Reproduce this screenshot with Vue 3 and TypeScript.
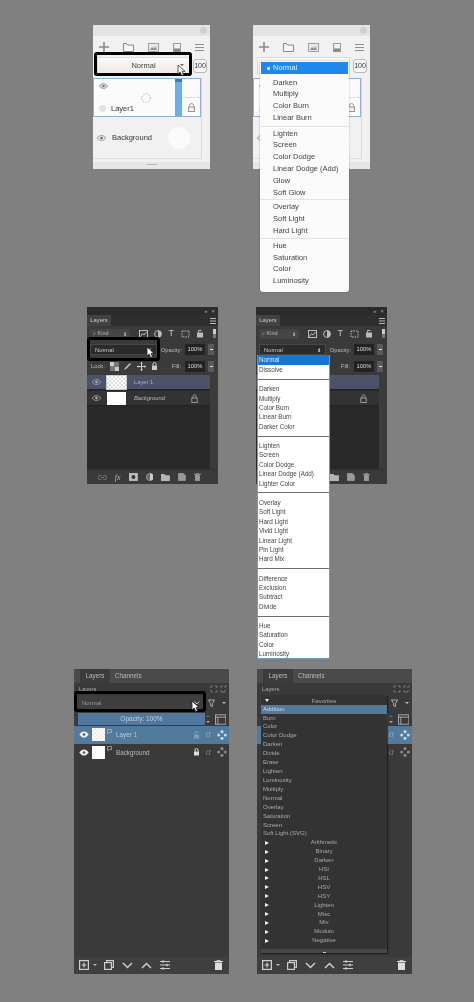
<script setup lang="ts">
const sketchMenu: string[][] = [
  ['Normal'],
  ['Darken', 'Multiply', 'Color Burn', 'Linear Burn'],
  ['Lighten', 'Screen', 'Color Dodge', 'Linear Dodge (Add)', 'Glow', 'Soft Glow'],
  ['Overlay', 'Soft Light', 'Hard Light'],
  ['Hue', 'Saturation', 'Color', 'Luminosity'],
]
const psMenu: string[][] = [
  ['Normal', 'Dissolve'],
  ['Darken', 'Multiply', 'Color Burn', 'Linear Burn', 'Darker Color'],
  ['Lighten', 'Screen', 'Color Dodge', 'Linear Dodge (Add)', 'Lighter Color'],
  ['Overlay', 'Soft Light', 'Hard Light', 'Vivid Light', 'Linear Light', 'Pin Light', 'Hard Mix'],
  ['Difference', 'Exclusion', 'Subtract', 'Divide'],
  ['Hue', 'Saturation', 'Color', 'Luminosity'],
]
const kritaFav: string[] = [
  'Addition', 'Burn', 'Color', 'Color Dodge', 'Darken', 'Divide', 'Erase', 'Lighten',
  'Luminosity', 'Multiply', 'Normal', 'Overlay', 'Saturation', 'Screen', 'Soft Light (SVG)',
]
const kritaGroups: string[] = [
  'Arithmetic', 'Binary', 'Darken', 'HSI', 'HSL', 'HSV', 'HSY', 'Lighten', 'Misc', 'Mix', 'Modulo', 'Negative',
]
const variants: boolean[] = [false, true]
</script>

<template>
  <main class="page">
    <!-- Row 1: sketch-style app -->
    <section class="row row-a">
      <article v-for="open in variants" :key="'a' + open" class="sk">
        <header class="sk-title"><i class="sk-dot"></i></header>
        <nav class="sk-tools">
          <svg width="10" height="10" viewBox="0 0 10 10"><path d="M5 0v10M0 5h10" stroke="#8a8a8a" stroke-width="1.6" /></svg>
          <svg width="11" height="9" viewBox="0 0 11 9"><path d="M.5 8.5v-8h3l1 1.500h6v6.500z" fill="#f6f6f6" stroke="#8a8a8a" /></svg>
          <svg width="11" height="9" viewBox="0 0 11 9"><rect x=".5" y=".5" width="10" height="8" fill="#e8e8e8" stroke="#a0a0a0" /><path d="M2 7l2-3 2 2 1-3 2 4z" fill="#8a8a8a" /></svg>
          <svg width="8" height="9" viewBox="0 0 8 9"><rect x=".5" y=".5" width="7" height="8" fill="#f2f2f2" stroke="#999" /><rect x="1" y="5.500" width="6" height="3" fill="#888" /></svg>
          <svg width="9" height="7" viewBox="0 0 9 7"><path d="M0 .5h9M0 3.500h9M0 6.500h9" stroke="#909090" /></svg>
        </nav>
        <div class="sk-select">
          <div class="sk-field"><span v-if="!open">Normal</span><b class="sk-caret"></b></div>
          <div class="sk-hundred">100</div>
        </div>
        <div class="sk-list">
          <div class="sk-row sk-active">
            <div class="sk-body">
              <svg class="sk-eye" width="9" height="6" viewBox="0 0 9 6"><path d="M.3 3C2.500-.4 6.500-.4 8.700 3 6.500 6.400 2.500 6.400.3 3z" fill="#d8d8d8" stroke="#8a8a8a" stroke-width=".7" /><circle cx="4.500" cy="3" r="1.300" fill="#777" /></svg>
              <svg class="sk-spin" width="10" height="10" viewBox="0 0 10 10"><circle cx="5" cy="5" r="4.300" fill="none" stroke="#999" stroke-width=".8" stroke-dasharray="1.400 1.400" /></svg>
              <div class="sk-name"><i class="sk-ghost"></i><span v-if="!open">Layer1</span></div>
            </div>
            <div class="sk-bar"></div>
            <div class="sk-side">
              <div></div>
              <div><svg width="7" height="9" viewBox="0 0 7 9"><path d="M1.500 4V2.500a2 2 0 0 1 4 0V4" fill="none" stroke="#9a9a9a" /><rect x=".5" y="4" width="6" height="4.500" fill="#eee" stroke="#9a9a9a" /></svg></div>
            </div>
          </div>
          <div class="sk-row sk-plain">
            <svg width="9" height="6" viewBox="0 0 9 6"><path d="M.3 3C2.500-.4 6.500-.4 8.700 3 6.500 6.400 2.500 6.400.3 3z" fill="#eee" stroke="#777" stroke-width=".7" /><circle cx="4.500" cy="3" r="1.300" fill="#666" /></svg>
            <span v-if="!open">Background</span>
            <i class="sk-thumb"></i>
          </div>
        </div>
        <footer class="sk-foot"><i></i></footer>

        <div v-if="!open" class="callout sk-callout"></div>
        <svg v-if="!open" class="cursor sk-cur" width="9" height="13" viewBox="0 0 9 13"><path d="M1 1v9l2.200-2 1.500 3.500 1.800-.8L5 7.400h3z" fill="#fff" stroke="#333" stroke-width=".8" /></svg>

        <div v-if="open" class="sk-menu">
          <div v-for="(group, gi) in sketchMenu" :key="gi" class="sk-group">
            <div v-for="item in group" :key="item" class="sk-item" :class="{ 'sk-on': item === 'Normal' }">
              <i v-if="item === 'Normal'" class="sk-bullet"></i>{{ item }}
            </div>
          </div>
        </div>
        <svg v-if="open" class="cursor sk-cur2" width="9" height="13" viewBox="0 0 9 13"><path d="M1 1v9l2.200-2 1.500 3.500 1.800-.8L5 7.400h3z" fill="#fff" stroke="#333" stroke-width=".8" /></svg>
      </article>
    </section>

    <!-- Row 2: Photoshop-style panel -->
    <section class="row row-b">
      <article v-for="open in variants" :key="'b' + open" class="ps">
        <header class="ps-strip"><span>«</span><span>×</span></header>
        <div class="ps-tabs"><div class="ps-tab">Layers</div><svg width="6" height="6" viewBox="0 0 6 6"><path d="M0 .5h6M0 3h6M0 5.500h6" stroke="#bbb" /></svg></div>
        <div class="ps-kind">
          <div class="ps-kindbox"><span>⌕ Kind</span><b>⬍</b></div>
          <svg width="9" height="8" viewBox="0 0 9 8"><rect x=".5" y=".5" width="8" height="7" fill="none" stroke="#bbb" /><path d="M1.500 6.500l2-3 1.500 1.500 2.500-3" stroke="#bbb" fill="none" /></svg>
          <svg width="8" height="8" viewBox="0 0 8 8"><circle cx="4" cy="4" r="3.400" fill="none" stroke="#bbb" /><path d="M4 .6a3.400 3.400 0 0 1 0 6.800z" fill="#bbb" /></svg>
          <span class="ps-t">T</span>
          <svg width="9" height="8" viewBox="0 0 9 8"><path d="M1 1h7v6H1z" fill="none" stroke="#bbb" stroke-dasharray="1.500 1" /></svg>
          <svg width="8" height="9" viewBox="0 0 8 9"><path d="M1 3.500h6v5H1z" fill="#bbb" /><path d="M2.500 3.500V1.500h3" fill="none" stroke="#bbb" /></svg>
          <i class="ps-toggle"></i>
        </div>
        <div class="ps-blend">
          <div class="ps-select"><span>Normal</span><b>⬍</b></div>
          <span class="ps-label">Opacity:</span>
          <div class="ps-input">100%</div>
          <div class="ps-btn"><i></i></div>
        </div>
        <div class="ps-lock">
          <span class="ps-label ps-locktext" :class="{ 'ps-hid': open }">Lock:</span>
          <svg width="9" height="9" viewBox="0 0 8 8"><path d="M0 0h4v4H0zM4 4h4v4H4z" fill="#ccc" /><path d="M4 0h4v4H4zM0 4h4v4H0z" fill="#777" /></svg>
          <svg width="9" height="9" viewBox="0 0 9 9"><path d="M1 8l1-2L7 1l1 1-5 5z" fill="#ccc" /></svg>
          <svg width="9" height="9" viewBox="0 0 9 9"><path d="M4.500 0v9M0 4.500h9" stroke="#ccc" /><path d="M4.500 0l-1.500 1.500h3zM4.500 9l-1.500-1.500h3zM0 4.500l1.500-1.500v3zM9 4.500l-1.500-1.500v3z" fill="#ccc" /></svg>
          <svg width="7" height="8" viewBox="0 0 7 8"><path d="M2 3.500V2a1.500 1.500 0 0 1 3 0v1.500" fill="none" stroke="#ccc" /><rect x="1" y="3.500" width="5" height="4.500" fill="#ccc" /></svg>
          <span class="ps-label ps-fill">Fill:</span>
          <div class="ps-input">100%</div>
          <div class="ps-btn"><i></i></div>
        </div>
        <div class="ps-list">
          <div class="ps-layers">
            <div class="ps-row ps-sel">
              <svg width="9" height="6" viewBox="0 0 9 6"><path d="M.3 3C2.500-.4 6.500-.4 8.700 3 6.500 6.400 2.500 6.400.3 3z" fill="none" stroke="#aaa" stroke-width=".8" /><circle cx="4.500" cy="3" r="1.400" fill="#aaa" /></svg>
              <i class="ps-thumb ps-check"></i><span v-if="!open">Layer 1</span>
            </div>
            <div class="ps-row">
              <svg width="9" height="6" viewBox="0 0 9 6"><path d="M.3 3C2.500-.4 6.500-.4 8.700 3 6.500 6.400 2.500 6.400.3 3z" fill="none" stroke="#aaa" stroke-width=".8" /><circle cx="4.500" cy="3" r="1.400" fill="#aaa" /></svg>
              <i class="ps-thumb"></i><em v-if="!open">Background</em>
              <svg class="ps-rowlock" width="7" height="9" viewBox="0 0 7 9"><path d="M2 4V2.300a1.500 1.500 0 0 1 3 0V4" fill="none" stroke="#999" /><rect x=".8" y="4" width="5.400" height="4.500" fill="none" stroke="#999" /></svg>
            </div>
          </div>
          <div class="ps-scroll"></div>
        </div>
        <footer class="ps-foot">
          <svg width="9" height="5" viewBox="0 0 9 5"><path d="M3.500.5H2a2 2 0 0 0 0 4h1.500M5.500.5H7a2 2 0 0 1 0 4H5.500M3 2.500h3" fill="none" stroke="#777" /></svg>
          <span class="ps-fx" :class="{ 'ps-hid': open }">fx</span>
          <svg width="9" height="8" viewBox="0 0 9 8"><rect width="9" height="8" fill="#bbb" /><circle cx="4.500" cy="4" r="2" fill="#333" /></svg>
          <svg width="8" height="8" viewBox="0 0 8 8"><circle cx="4" cy="4" r="3.600" fill="#666" stroke="#bbb" stroke-width=".6" /><path d="M4 .4a3.600 3.600 0 0 1 0 7.200z" fill="#ccc" /></svg>
          <svg width="9" height="7" viewBox="0 0 9 7"><path d="M0 7V0h3.500l1 1.300H9V7z" fill="#b5b5b5" /></svg>
          <svg width="8" height="8" viewBox="0 0 8 8"><path d="M.5.500h5l2 2v5h-7z" fill="#999" stroke="#bbb" stroke-width=".5" /></svg>
          <svg width="7" height="8" viewBox="0 0 7 8"><path d="M0 1.300h7M2.500 1V.3h2V1" stroke="#999" fill="none" /><path d="M1 2h5v6H1z" fill="#999" /></svg>
        </footer>

        <div v-if="!open" class="callout ps-callout"></div>
        <svg v-if="!open" class="cursor ps-cur" width="9" height="13" viewBox="0 0 9 13"><path d="M1 1v9l2.200-2 1.500 3.500 1.800-.8L5 7.400h3z" fill="#fff" stroke="#222" stroke-width=".8" /></svg>

        <div v-if="open" class="ps-menu">
          <div v-for="(group, gi) in psMenu" :key="gi" class="ps-group">
            <div v-for="item in group" :key="item" class="ps-item" :class="{ 'ps-on': item === 'Normal' }">{{ item }}</div>
          </div>
        </div>
        <svg v-if="open" class="cursor ps-cur2" width="13" height="15" viewBox="0 0 13 15"><path d="M1 1v9l2.200-2 1.500 3.500 1.800-.8L5 7.400h3z" fill="#fff" stroke="#222" stroke-width=".8" /><path d="M10 11.500v3M8.500 13h3" stroke="#555" stroke-width=".8" /></svg>
      </article>
    </section>

    <!-- Row 3: Krita-style docker -->
    <section class="row row-c">
      <article v-for="open in variants" :key="'c' + open" class="kr">
        <div class="kr-tabs"><div class="kr-tab kr-tabon">Layers</div><div class="kr-tab">Channels</div></div>
        <div class="kr-label">
          <span>Layers</span>
          <svg width="18" height="8" viewBox="0 0 18 8"><path d="M0 2h2V0M6 0v2h2M0 6h2v2M6 8V6h2M14 2h2V0M10 2h2V0M10 6h2v2M14 8V6h2" fill="none" stroke="#777" /></svg>
        </div>
        <div class="kr-blend">
          <div class="kr-select"><span v-if="!open">Normal</span><i v-else></i><svg width="6" height="4" viewBox="0 0 6 4"><path d="M.5.500L3 3 5.500.500" fill="none" stroke="#bbb" /></svg></div>
          <svg width="8" height="9" viewBox="0 0 8 9"><path d="M.5.500h7L5 4.500V8L3 7V4.500z" fill="none" stroke="#bbb" /></svg>
          <b class="kr-tri"></b>
        </div>
        <div class="kr-op">
          <div class="kr-bar"><template v-if="!open">Opacity:  100%</template></div>
          <div class="kr-spin"><b></b><b></b></div>
          <svg width="12" height="11" viewBox="0 0 12 11"><rect x=".5" y=".5" width="11" height="10" fill="none" stroke="#aaa" /><path d="M.5 3h11M3 3v7.500" stroke="#aaa" /></svg>
        </div>
        <div class="kr-row kr-sel">
          <svg width="10" height="7" viewBox="0 0 10 7"><path d="M.3 3.500C3-.6 7-.6 9.700 3.500 7 7.600 3 7.600.3 3.500z" fill="#eee" /><circle cx="5" cy="3.500" r="1.300" fill="#555" /></svg>
          <i class="kr-thumb kr-lay"></i>
          <svg class="kr-mini" width="6" height="6" viewBox="0 0 6 6"><path d="M.5.500h4v3h-2L1 5V3.500H.5z" fill="none" stroke="#bbb" stroke-width=".7" /></svg>
          <span v-if="!open">Layer 1</span>
          <div class="kr-icons">
            <svg width="7" height="8" viewBox="0 0 7 8"><path d="M2 3.500V2a1.500 1.500 0 0 1 3 0" fill="none" stroke="#7b9cbb" /><rect x="1" y="3.500" width="5" height="4" fill="#7b9cbb" /></svg>
            <span class="kr-a">α</span>
            <svg width="10" height="10" viewBox="0 0 9 9"><circle cx="4.500" cy="1.500" r="1.400" fill="#c7d7e5" /><circle cx="1.500" cy="4.500" r="1.400" fill="#c7d7e5" /><circle cx="7.500" cy="4.500" r="1.400" fill="#c7d7e5" /><circle cx="4.500" cy="7.500" r="1.400" fill="#c7d7e5" /></svg>
          </div>
        </div>
        <div class="kr-row">
          <svg width="10" height="7" viewBox="0 0 10 7"><path d="M.3 3.500C3-.6 7-.6 9.700 3.500 7 7.600 3 7.600.3 3.500z" fill="#eee" /><circle cx="5" cy="3.500" r="1.300" fill="#555" /></svg>
          <i class="kr-thumb"></i>
          <svg class="kr-mini" width="6" height="6" viewBox="0 0 6 6"><path d="M.5.500h4v3h-2L1 5V3.500H.5z" fill="none" stroke="#bbb" stroke-width=".7" /></svg>
          <span v-if="!open">Background</span>
          <div class="kr-icons">
            <svg width="7" height="8" viewBox="0 0 7 8"><path d="M2 3.500V2a1.500 1.500 0 0 1 3 0v1.500" fill="none" stroke="#ddd" /><rect x="1" y="3.500" width="5" height="4" fill="#ddd" /></svg>
            <span class="kr-a kr-dim">α</span>
            <svg width="10" height="10" viewBox="0 0 9 9"><circle cx="4.500" cy="1.500" r="1.400" fill="#888" /><circle cx="1.500" cy="4.500" r="1.400" fill="#888" /><circle cx="7.500" cy="4.500" r="1.400" fill="#888" /><circle cx="4.500" cy="7.500" r="1.400" fill="#888" /></svg>
          </div>
        </div>
        <div class="kr-fill"></div>
        <footer class="kr-foot">
          <svg width="10" height="10" viewBox="0 0 10 10"><rect x=".6" y=".6" width="8.800" height="8.800" fill="none" stroke="#d0d0d0" stroke-width="1.200" /><path d="M5 2.500v5M2.500 5h5" stroke="#d0d0d0" stroke-width="1.200" /></svg>
          <b class="kr-tri kr-tri2"></b>
          <svg width="10" height="10" viewBox="0 0 10 10"><rect x=".6" y="2.600" width="6.800" height="6.800" fill="none" stroke="#ccc" stroke-width="1.200" /><path d="M2.600 2.600V.6h6.800v6.800H7.400" fill="none" stroke="#ccc" stroke-width="1.200" /></svg>
          <svg width="11" height="7" viewBox="0 0 11 7"><path d="M1 1l4.500 4.500L10 1" fill="none" stroke="#ccc" stroke-width="1.500" /></svg>
          <svg width="11" height="7" viewBox="0 0 11 7"><path d="M1 6l4.500-4.500L10 6" fill="none" stroke="#ccc" stroke-width="1.500" /></svg>
          <svg width="10" height="10" viewBox="0 0 10 10"><path d="M0 1.500h10M0 5h10M0 8.500h10" stroke="#ccc" stroke-width="1.100" /><path d="M3 .3v2.400M7 3.800v2.400M3 7.300v2.400" stroke="#ccc" stroke-width="1.400" /></svg>
          <svg class="kr-trash" width="9" height="10" viewBox="0 0 9 10"><path d="M0 1.500h9M3 1V.3h3V1" stroke="#ddd" fill="none" /><path d="M1 2.500h7V10H1z" fill="#ddd" /></svg>
        </footer>

        <div v-if="!open" class="callout kr-callout"></div>
        <svg v-if="!open" class="cursor kr-cur" width="9" height="13" viewBox="0 0 9 13"><path d="M1 1v9l2.200-2 1.500 3.500 1.800-.8L5 7.400h3z" fill="#fff" stroke="#222" stroke-width=".8" /></svg>

        <div v-if="open" class="kr-menu">
          <div class="kr-head"><b class="kr-down"></b>Favorites</div>
          <div v-for="(item, i) in kritaFav" :key="item" class="kr-item" :class="{ 'kr-on': i === 0 }">{{ item }}</div>
          <div v-for="g in kritaGroups" :key="g" class="kr-head"><b class="kr-right"></b>{{ g }}</div>
          <div class="kr-more"><b></b></div>
        </div>
        <svg v-if="open" class="cursor kr-cur2" width="9" height="13" viewBox="0 0 9 13"><path d="M1 1v9l2.200-2 1.500 3.500 1.800-.8L5 7.400h3z" fill="#fff" stroke="#222" stroke-width=".8" /></svg>
      </article>
    </section>
  </main>
</template>

<style>
html, body { margin: 0; background: #808080; }
</style>

<style scoped>
.page { width: 474px; height: 1002px; box-sizing: border-box; padding-top: 25px; overflow: hidden; background: #808080; font-family: "Liberation Sans", Arial, sans-serif; filter: blur(0.35px); }
.page i, .page b, .page em { display: block; }
.page em { font-style: italic; }
.row { display: flex; }
.row-a { margin-left: 93px; gap: 43px; }
.row-b { margin-top: 139px; margin-left: 87px; gap: 38px; }
.row-c { margin-top: 185px; margin-left: 74px; gap: 28px; }
.callout { position: absolute; box-sizing: border-box; border: 3px solid #000; border-radius: 3px; }
.cursor { position: absolute; }

/* sketch-style */
.sk { position: relative; width: 117px; height: 143px; background: #f1f1f1; display: flex; flex-direction: column; color: #333; font-size: 7.500px; }
.sk-title { height: 11px; background: #e3e3e3; display: flex; justify-content: flex-end; align-items: center; padding-right: 3px; flex: none; }
.sk-dot { width: 7px; height: 7px; border-radius: 50%; background: #cfcfcf; }
.sk-tools { height: 18px; flex: none; display: flex; align-items: center; justify-content: space-between; padding: 4px 6px 0 6px; box-sizing: border-box; }
.sk-select { height: 21px; flex: none; margin-top: 1px; display: flex; align-items: center; padding: 0 3px 0 4px; gap: 3px; box-sizing: border-box; }
.sk-field { flex: 1; height: 15px; background: linear-gradient(#fafafa, #f1e9e2); border: 1px solid #ddd; display: flex; justify-content: center; align-items: center; position: relative; color: #444; }
.sk-caret { position: absolute; right: 5px; top: 6px; border: 2.500px solid transparent; border-top-color: #666; }
.sk-hundred { width: 12px; height: 12px; border: 1px solid #bbb; border-radius: 3px; font-size: 7px; text-align: center; line-height: 12px; background: #f6f6f6; flex: none; }
.sk-list { margin-top: 2px; width: 108px; flex: 1; display: flex; flex-direction: column; border-right: 1px solid #d8d8d8; }
.sk-row { box-sizing: border-box; flex: none; }
.sk-active { height: 39px; border: 1px solid #8db4d8; background: #fbfbfb; display: flex; }
.sk-body { flex: 1; display: flex; flex-direction: column; padding: 4px 4px 3px 5px; position: relative; }
.sk-spin { position: absolute; left: 47px; top: 14px; }
.sk-name { margin-top: auto; display: flex; align-items: center; gap: 5px; }
.sk-ghost { width: 7px; height: 7px; border-radius: 50%; background: #e2e2e2; }
.sk-bar { width: 7px; background: linear-gradient(#2f7fc0 0, #2f7fc0 3px, #6aaeea 3px); flex: none; }
.sk-side { width: 18px; flex: none; display: flex; flex-direction: column; }
.sk-side > div { flex: 1; display: flex; align-items: center; justify-content: center; }
.sk-side > div:first-child { border-bottom: 1px solid #ddd; }
.sk-plain { height: 42px; display: flex; align-items: center; padding: 0 10px 0 4px; gap: 6px; border-bottom: 1px solid #ddd; font-size: 7.500px; }
.sk-thumb { margin-left: auto; width: 22px; height: 22px; border-radius: 50%; background: #fbfbfb; margin-right: 1px; }
.sk-foot { height: 7px; flex: none; margin-top: 3px; background: #e7e7e7; display: flex; justify-content: center; align-items: flex-start; }
.sk-foot i { width: 11px; height: 1px; background: #bbb; margin-top: 2px; }
.sk-callout { left: 1px; top: 27px; width: 98px; height: 24px; }
.sk-cur { left: 84px; top: 39px; }
.sk-cur2 { left: 86px; top: 45px; }
.sk-menu { position: absolute; left: 7px; top: 36px; width: 89px; box-sizing: border-box; height: 231px; background: #fbfbfb; border-radius: 3px; padding: 1px 0; box-shadow: 0 0 2px rgba(0,0,0,.3); font-size: 7.500px; color: #444; z-index: 2; }
.sk-group { padding: 1px 0; border-bottom: 1px solid #e2e2e2; }
.sk-group:last-child { border-bottom: 0; }
.sk-group:first-child { padding: 0 0 1px; border-bottom: 0; }
.sk-item { height: 11.800px; line-height: 11.800px; padding-left: 13px; position: relative; white-space: nowrap; }
.sk-on { background: #1f88ee; color: #e8f2fc; margin: 0 1px; padding-left: 12px; height: 12px; }
.sk-bullet { position: absolute; left: 6px; top: 5px; width: 2.500px; height: 2.500px; border-radius: 50%; background: #fff; }
.sk-group:nth-child(2) { padding-top: 1.500px; padding-bottom: 2px; }

/* photoshop-style */
.ps { position: relative; width: 131px; height: 177px; background: #3a3a3a; display: flex; flex-direction: column; font-size: 5.800px; color: #ccc; }
.ps-strip { height: 8px; flex: none; background: #2b2b2b; display: flex; justify-content: flex-end; gap: 4px; padding-right: 3px; font-size: 6px; line-height: 8px; color: #aaa; }
.ps-tabs { height: 11px; flex: none; background: #2e2e2e; display: flex; justify-content: space-between; align-items: center; padding-right: 2px; }
.ps-tab { width: 24px; height: 11px; background: #424242; text-align: center; line-height: 11px; color: #ccc; }
.ps-kind { height: 15px; flex: none; display: flex; align-items: center; padding: 0 2px 0 3px; gap: 6.500px; }
.ps-kindbox { width: 40px; height: 10px; background: #454545; border-radius: 1px; display: flex; justify-content: space-between; padding: 0 3px; align-items: center; box-sizing: border-box; margin-right: 2px; color: #bbb; font-size: 5.500px; }
.ps-kindbox b { font-weight: 400; font-size: 5px; }
.ps-t { font-size: 9px; color: #c5c5c5; line-height: 9px; }
.ps-toggle { width: 3px; height: 9px; background: linear-gradient(#ccc 50%, #777 50%); margin-left: auto; }
.ps-blend { height: 17px; flex: none; display: flex; align-items: center; padding: 0 4px 0 3px; }
.ps-select { width: 67px; height: 11px; box-sizing: border-box; background: #2b2b2b; border: 1px solid #484848; display: flex; justify-content: space-between; align-items: center; padding: 0 4px 0 4px; margin-right: 4px; color: #c8c8c8; }
.ps-select b { font-weight: 400; font-size: 5px; color: #ccc; }
.ps-label { color: #bbb; white-space: nowrap; }
.ps-input { width: 20px; height: 11px; background: #222; color: #ddd; line-height: 11px; text-align: center; flex: none; margin-left: 3px; }
.ps-btn { width: 6px; height: 11px; background: #595959; margin-left: 3px; display: flex; align-items: center; justify-content: center; flex: none; }
.ps-btn i { width: 3px; height: 1px; background: #ddd; }
.ps-lock { height: 16px; flex: none; display: flex; align-items: center; gap: 4px; padding: 0 4px 0 4px; }
.ps-locktext { margin-right: 1px; }
.ps-lock svg:nth-of-type(3) { margin-left: 1px; }
.ps-lock svg:nth-of-type(4) { margin-left: 1px; }
.ps-lock .ps-input { margin-left: -1px; }
.ps-lock .ps-btn { margin-left: -1px; }
.ps-fill { margin-left: auto; margin-right: 1px; }
.ps-list { flex: 1; display: flex; background: #262626; margin-top: 1px; }
.ps-layers { width: 123px; background: #292929; display: flex; flex-direction: column; gap: 1px; }
.ps-scroll { flex: 1; background: #3b3b3b; }
.ps-row { height: 15px; display: flex; align-items: center; padding-left: 5px; background: #333; color: #bbb; box-sizing: border-box; border-bottom: 1px solid #222; }
.ps-sel { background: #4b5269; color: #a9aec0; }
.ps-thumb { width: 19px; height: 13px; background: #fdfdfd; margin: 0 8px 0 6px; flex: none; }
.ps-check { background: repeating-conic-gradient(#ddd 0 25%, #fff 0 50%) 0 0 / 4px 4px; outline: 1px solid #ccc; }
.ps-rowlock { margin-left: auto; margin-right: 12px; }
.ps-foot { height: 14px; flex: none; background: #3a3a3a; border-top: 1px solid #303030; display: flex; align-items: center; padding: 0 17px 0 11px; gap: 8px; justify-content: space-between; }
.ps-fx { font-family: "Liberation Serif", serif; font-style: italic; font-size: 8px; color: #bbb; }
.ps-hid { visibility: hidden; }
.ps-callout { left: 0; top: 30px; width: 73px; height: 24px; }
.ps-cur { left: 59px; top: 39px; }
.ps-cur2 { left: 55px; top: 52px; }
.ps-menu { position: absolute; left: 1px; top: 48px; width: 73px; height: 304px; box-sizing: border-box; background: #fff; border: 1px solid #6e9bc3; border-top: 0; color: #444; z-index: 2; font-size: 6.300px; }
.ps-group { padding: 0 0 4.300px; border-bottom: 1px solid #6d7176; margin-bottom: 4.300px; }
.ps-group:last-child { border-bottom: 0; margin: 0; padding: 0; }
.ps-item { height: 9.460px; line-height: 9.460px; padding-left: 1px; white-space: nowrap; }
.ps-on { background: #1478d2; color: #dbe9f5; height: 10px; line-height: 10px; }

/* krita-style */
.kr { position: relative; width: 155px; height: 305px; background: #3a3a3a; display: flex; flex-direction: column; font-size: 6.300px; color: #b8b8b8; }
.kr-tabs { height: 14px; flex: none; background: #4a4a4a; display: flex; padding-left: 6px; }
.kr-tab { padding: 0 5px; line-height: 14px; color: #bbb; font-size: 6.300px; }
.kr-tabon { background: #3c3c3c; width: 20px; text-align: center; margin-right: 0; }
.kr-label { height: 12px; flex: none; display: flex; align-items: center; justify-content: space-between; padding: 0 1px 0 5px; color: #aaa; font-size: 5.800px; }
.kr-blend { height: 16px; flex: none; display: flex; align-items: center; padding: 0 3px 0 3px; gap: 3px; }
.kr-select { width: 127px; height: 14px; flex: none; box-sizing: border-box; background: #3e3e3e; display: flex; align-items: center; justify-content: space-between; padding: 0 4px 0 5px; color: #999; margin-right: 1px; font-size: 6px; }
.kr-tri { width: 0; height: 0; border: 2px solid transparent; border-top: 2.500px solid #bbb; border-bottom: 0; margin-left: 4px; }
.kr-op { height: 14px; flex: none; display: flex; align-items: center; padding: 0 3px 0 4px; margin-top: 1px; }
.kr-bar { width: 127px; height: 12px; background: #50789f; color: #c4cfd9; text-align: center; line-height: 12px; white-space: pre; flex: none; font-size: 6.500px; }
.kr-spin { width: 6px; height: 12px; display: flex; flex-direction: column; align-items: center; justify-content: space-around; margin-right: 4px; }
.kr-spin b:first-child { border: 2px solid transparent; border-bottom-color: #4a6e92; border-top: 0; }
.kr-spin b:last-child { border: 2px solid transparent; border-top-color: #aaa; border-bottom: 0; }
.kr-row { height: 17.500px; flex: none; display: flex; align-items: center; padding-left: 5px; box-sizing: border-box; }
.kr-sel { background: #527a9c; color: #b9c8d6; }
.kr-thumb { width: 13px; height: 13px; background: #fff; margin-left: 3px; flex: none; }
.kr-lay { background: repeating-conic-gradient(#eee 0 25%, #fbfbfb 0 50%) 0 0 / 4px 4px; }
.kr-mini { margin: -6px 0 0 2px; flex: none; }
.kr-row > span { margin-left: 3px; }
.kr-icons { margin-left: auto; display: flex; align-items: center; gap: 6px; padding-right: 2px; }
.kr-a { font-size: 9px; color: #86a5c0; font-style: italic; line-height: 9px; margin: 0 !important; }
.kr-dim { color: #777; }
.kr-fill { flex: 1; background: #3a3a3a; }
.kr-foot { height: 17px; flex: none; background: #3f3f3f; display: flex; align-items: center; padding: 0 6px 1px 5px; gap: 8px; box-sizing: border-box; }
.kr-tri2 { margin-left: -4px; margin-right: -1px; }
.kr-trash { margin-left: auto; }
.kr-foot svg:nth-of-type(3) { margin-left: 0; }
.kr-callout { left: 0; top: 22px; width: 132px; height: 21px; }
.kr-cur { left: 117px; top: 31px; }
.kr-cur2 { left: 98px; top: 43px; }
.kr-menu { position: absolute; left: 4px; top: 26px; width: 126px; height: 258px; background: #333; box-shadow: 1px 1px 1px rgba(0,0,0,.45); color: #aaa; z-index: 2; font-size: 6px; overflow: hidden; }
.kr-head { height: 8.900px; line-height: 8.900px; text-align: center; position: relative; color: #a8a8a8; }
.kr-head:first-child { height: 10px; line-height: 12px; }
.kr-down { position: absolute; left: 4px; top: 4px; border: 2.200px solid transparent; border-top: 3px solid #eee; border-bottom: 0; }
.kr-right { position: absolute; left: 4px; top: 2.500px; border: 2.200px solid transparent; border-left: 4px solid #eee; border-right: 0; }
.kr-item { height: 8.930px; line-height: 8.930px; padding-left: 2px; white-space: nowrap; }
.kr-on { background: #527a9c; color: #d0dae3; margin: 0 0 0 -1px; padding-left: 3px; height: 8.500px; }
.kr-more { height: 6px; margin-top: 4px; background: #474747; display: flex; justify-content: center; align-items: center; }
.kr-more b { width: 3px; height: 1px; background: #ccc; }
</style>
